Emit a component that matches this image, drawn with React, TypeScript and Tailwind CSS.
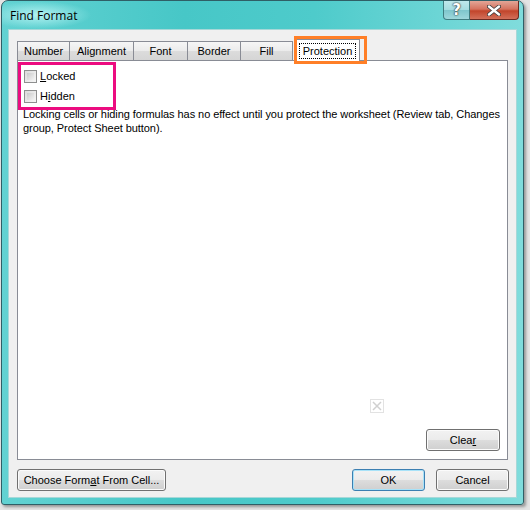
import React from 'react';

const font = { fontFamily: '"Liberation Sans", Arial, sans-serif' };

const Tab = ({ label, w }: { label: string; w: string }) => (
  <div
    className={`${w} h-[19px] -ml-px first:ml-0 flex items-center justify-center border border-b-0 border-[#898c95] bg-[linear-gradient(#f6f6f6,#ebebeb_50%,#dcdcdc_51%,#d5d5d5)] text-[11px] text-black`}
  >
    {label}
  </div>
);

const Check = ({ children }: { children: React.ReactNode }) => (
  <div className="flex items-center h-[20px]">
    <div className="w-[13px] h-[13px] border border-[#8e8f8f] bg-[linear-gradient(135deg,#dcdcdc,#f6f6f6)] p-[2px]">
      <div className="w-full h-full bg-[linear-gradient(135deg,#cbcbcb,#f2f2f2)]" />
    </div>
    <span className="ml-[3px] text-[11px]">{children}</span>
  </div>
);

const Btn = ({ children, w, def }: { children: React.ReactNode; w: string; def?: boolean }) => (
  <div
    className={`${w} h-[22px] rounded-[3px] border ${
      def ? 'border-[#3c7fb1] shadow-[inset_0_0_0_1px_#a8e2f8]' : 'border-[#707070] shadow-[inset_0_0_0_1px_#fbfbfb]'
    } bg-[linear-gradient(#f2f2f2,#ebebeb_50%,#dddddd_51%,#cfcfcf)] flex items-center justify-center text-[11px] text-black`}
  >
    <span className="whitespace-nowrap">{children}</span>
  </div>
);

export default function App() {
  return (
    <div className="w-[530px] h-[510px] bg-[#e4e4e4] overflow-hidden" style={font}>
      <div className="ml-px w-[523px] h-[505px] rounded-t-[7px] rounded-b-[3px] border border-[#2f5f66] bg-[linear-gradient(90deg,#62d2d2,#47c7c7_35%,#4ecbcb_60%,#80dcdc)] shadow-[2px_2px_3px_rgba(0,0,0,0.35)] flex flex-col">
        {/* title bar */}
        <div className="h-[28px] flex items-start relative">
          <div className="absolute left-0 top-0 w-[90px] h-[28px] rounded-tl-[7px] bg-[radial-gradient(ellipse_at_40%_50%,rgba(200,250,250,0.8),rgba(200,250,250,0)_70%)]" />
          <span className="relative mt-[6px] ml-[8px] text-[12px] text-black" style={{ fontFamily: '"Open Sans", "Liberation Sans", sans-serif' }}>
            Find Format
          </span>
          <div className="ml-auto mr-[4px] flex">
            <div className="w-[27px] h-[19px] rounded-bl-[4px] border border-t-0 border-[#3f7d80] bg-[linear-gradient(#bfe9ec,#a5dce0_50%,#7ec6cc_51%,#9ed8dc)] flex items-center justify-center">
              <span className="text-white font-bold text-[15px] leading-none [text-shadow:0_0_1px_#222,0_0_2px_#222]" style={{ fontFamily: '"DejaVu Sans", sans-serif' }}>
                ?
              </span>
            </div>
            <div className="w-[49px] h-[19px] rounded-br-[4px] border border-t-0 border-l-0 border-[#6a2b22] bg-[linear-gradient(#e3a697,#d5735f_45%,#c2452b_55%,#d3705a)] flex items-center justify-center">
              <svg width="14" height="11" viewBox="0 0 14 11">
                <path d="M2 1.5 L12 9.5 M12 1.5 L2 9.5" stroke="#3a3a3a" strokeWidth="4" strokeLinecap="round" />
                <path d="M2 1.5 L12 9.5 M12 1.5 L2 9.5" stroke="#fff" strokeWidth="2.4" strokeLinecap="round" />
              </svg>
            </div>
          </div>
        </div>
        {/* client */}
        <div className="mx-[6px] mb-[6px] flex-1 bg-[#f0f0f0] border border-[#a7d8d8] flex flex-col px-[8px] pt-[8px]">
          <div className="flex items-end h-[22px] relative z-10">
            <Tab label="Number" w="w-[53px]" />
            <Tab label="Alignment" w="w-[65px]" />
            <Tab label="Font" w="w-[55px]" />
            <Tab label="Border" w="w-[54px]" />
            <Tab label="Fill" w="w-[53px]" />
            <div className="ml-[2px] w-[65px] h-[22px] mb-[-1px] bg-white border border-b-0 border-[#898c95] flex items-center justify-center relative">
              <span className="border border-dotted border-black px-[3px] leading-[14px] text-[11px]">Protection</span>
              <div className="absolute -left-[2px] -top-[4px] w-[73px] h-[28px] border-[3px] border-[#ff7f27]" />
            </div>
          </div>
          <div className="h-[400px] bg-white border border-[#898c95] flex flex-col px-[5px] pt-[1px]">
            <div className="w-[98px] border-[3px] border-[#ec0c80] -ml-[5px] px-[3px] py-[1px]">
              <Check>
                <span className="underline">L</span>ocked
              </Check>
              <Check>
                H<span className="underline">i</span>dden
              </Check>
            </div>
            <p className="-mt-[3px] text-[11px] leading-[14px] tracking-[-0.06px] whitespace-nowrap text-black">
              Locking cells or hiding formulas has no effect until you protect the worksheet (Review tab, Changes
              <br />
              group, Protect Sheet button).
            </p>
            <div className="flex-1 flex flex-col">
              <div className="mt-auto ml-[347px] w-[14px] h-[14px] border border-[#e2e2e2] flex items-center justify-center mb-[16px]">
                <svg width="10" height="10" viewBox="0 0 10 10">
                  <path d="M1 1 L9 9 M9 1 L1 9" stroke="#d0d0d0" strokeWidth="1.5" />
                </svg>
              </div>
              <div className="flex justify-end mb-[8px] mr-[2px]">
                <Btn w="w-[74px]">
                  Clea<span className="underline">r</span>
                </Btn>
              </div>
            </div>
          </div>
          <div className="flex items-center mt-[9px]">
            <Btn w="w-[149px]">
              Choose Form<span className="underline">a</span>t From Cell...
            </Btn>
            <div className="ml-auto flex gap-[11px] mr-[-1px]">
              <Btn w="w-[73px]" def>
                OK
              </Btn>
              <Btn w="w-[73px]">Cancel</Btn>
            </div>
          </div>
        </div>
      </div>
    </div>
  );
}
